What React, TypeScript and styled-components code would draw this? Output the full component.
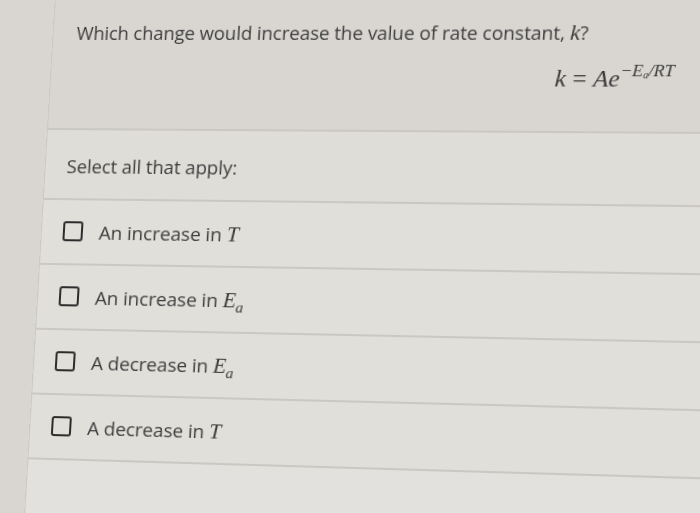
import React from "react";
import styled, { createGlobalStyle } from "styled-components";

const Global = createGlobalStyle`
  html, body {
    margin: 0;
    padding: 0;
    width: 700px;
    height: 513px;
    overflow: hidden;
    background: #d9d6d1;
  }
`;

const Viewport = styled.div`
  width: 700px;
  height: 513px;
  overflow: hidden;
  background: #d9d6d1;
  font-family: "Open Sans", "Noto Sans", sans-serif;
  color: #3e3e3e;
`;

const Sheet = styled.div`
  margin-left: 52px;
  width: 720px;
  min-height: 600px;
  display: flex;
  flex-direction: column;
  background: #e1dfda;
  border-left: 1px solid #cdcac5;
  transform: perspective(1000px) rotateY(-4.1deg) skewX(-3.4deg);
  transform-origin: 0 45px;
`;

const QuestionCard = styled.div`
  height: 128px;
  box-sizing: border-box;
  padding: 21px 122px 0 23px;
  background: #d9d6d2;
  display: flex;
  flex-direction: column;
`;

const Prompt = styled.div`
  font-size: 18.2px;
  line-height: 24px;
  letter-spacing: -0.1px;
`;

const Formula = styled.div`
  align-self: flex-end;
  margin-top: 20px;
  font-family: "Liberation Serif", "Times New Roman", serif;
  font-size: 23.5px;
  line-height: 24px;
  color: #3a3a3a;
  white-space: nowrap;
`;

const Var = styled.i`
  font-style: italic;
`;

const Eq = styled.span`
  margin: 0 6px;
`;

const Sup = styled.sup`
  font-size: 16.5px;
  vertical-align: 10px;
  line-height: 0;
  font-style: italic;
`;

const Sub = styled.sub`
  font-size: 10px;
  vertical-align: -2px;
  line-height: 0;
`;

const SubA = styled.sub`
  font-family: "Liberation Serif", "Times New Roman", serif;
  font-style: italic;
  font-size: 15px;
  vertical-align: -5px;
  line-height: 0;
`;

const Row = styled.div<{ $h: number; $bg?: string }>`
  height: ${(p) => p.$h}px;
  box-sizing: border-box;
  border-top: 2px solid #cbc8c3;
  background: ${(p) => p.$bg || "#e1dfda"};
  display: flex;
  align-items: center;
  padding-left: 21px;
  gap: 16px;
`;

const Instruction = styled.div`
  font-size: 18.4px;
  line-height: 24px;
  margin-top: 3px;
  letter-spacing: -0.1px;
`;

const Box = styled.span`
  width: 20px;
  height: 20px;
  box-sizing: border-box;
  border: 2px solid #2c2c2c;
  border-radius: 3px;
  flex: none;
  margin-top: -2px;
`;

const Label = styled.span`
  font-size: 18.8px;
  line-height: 24px;
  letter-spacing: -0.1px;
  white-space: nowrap;
`;

const MathVar = styled.i`
  font-family: "Liberation Serif", "Times New Roman", serif;
  font-style: italic;
  font-size: 21px;
  color: #3a3a3a;
`;

const Filler = styled.div`
  flex: 1;
  border-top: 2px solid #cbc8c3;
  background: #e3e1dd;
`;

type Opt = { text: string; v: "T" | "Ea" };

const options: Opt[] = [
  { text: "An increase in ", v: "T" },
  { text: "An increase in ", v: "Ea" },
  { text: "A decrease in ", v: "Ea" },
  { text: "A decrease in ", v: "T" },
];

export default function App() {
  return (
    <Viewport>
      <Global />
      <Sheet>
        <QuestionCard>
          <Prompt>
            Which change would increase the value of rate constant, <MathVar>k</MathVar>?
          </Prompt>
          <Formula>
            <Var>k</Var>
            <Eq>=</Eq>
            <Var>A</Var>
            <Var>e</Var>
            <Sup>
              −E<Sub>a</Sub>/RT
            </Sup>
          </Formula>
        </QuestionCard>
        <Row $h={70} $bg="#dfddd8">
          <Instruction>Select all that apply:</Instruction>
        </Row>
        {options.map((o, i) => (
          <Row key={i} $h={65}>
            <Box />
            <Label>
              {o.text}
              {o.v === "T" ? (
                <MathVar>T</MathVar>
              ) : (
                <>
                  <MathVar>E</MathVar>
                  <SubA>a</SubA>
                </>
              )}
            </Label>
          </Row>
        ))}
        <Filler />
      </Sheet>
    </Viewport>
  );
}
